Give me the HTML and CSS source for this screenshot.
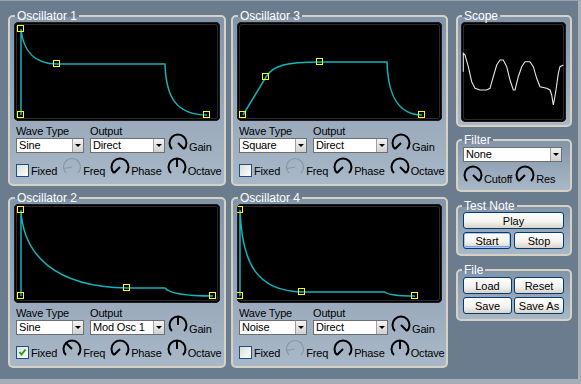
FILE: index.html
```html
<!DOCTYPE html>
<html lang="en">
<head>
  <meta charset="UTF-8">
  <title>Synth</title>
  <link rel="stylesheet" href="styles.css">
</head>
<body>
<div class="window">

  <!-- Oscillators -->
  <div class="oscillators">

    <fieldset class="group osc">
      <legend>Oscillator 1</legend>
      <div class="display">
        <svg width="206" height="99" viewBox="0 0 206 99">
          <path class="env" d="M7 93 L7 7 C9 28, 20 42, 43 42 L151 42 C152 75, 162 93, 193 93"/>
          <rect class="pt" x="3.5" y="3.5" width="6" height="6"/>
          <rect class="pt" x="3.5" y="89.5" width="6" height="6"/>
          <rect class="pt" x="39.5" y="38.5" width="6" height="6"/>
          <rect class="pt" x="189.5" y="89.5" width="6" height="6"/>
        </svg>
      </div>
      <div class="row1">
        <div class="field f1"><span class="label">Wave Type</span><div class="select">Sine<span class="arrow"></span></div></div>
        <div class="field f2"><span class="label">Output</span><div class="select">Direct<span class="arrow"></span></div></div>
        <div class="knob-item">
          <svg class="knob" viewBox="0 0 20 20"><path d="M3.99 16.01 A8.5 8.5 0 1 1 16.01 16.01"/><line x1="10" y1="10" x2="16.01" y2="16.01"/></svg>Gain
        </div>
      </div>
      <div class="row2">
        <div class="check"><span class="box"></span>Fixed</div>
        <div class="knob-item">
          <svg class="knob off" viewBox="0 0 20 20"><path d="M3.99 16.01 A8.5 8.5 0 1 1 16.01 16.01"/><line x1="10" y1="10" x2="1.63" y2="11.48"/></svg>Freq
        </div>
        <div class="knob-item">
          <svg class="knob" viewBox="0 0 20 20"><path d="M3.99 16.01 A8.5 8.5 0 1 1 16.01 16.01"/><line x1="10" y1="10" x2="3.99" y2="16.01"/></svg>Phase
        </div>
        <div class="knob-item">
          <svg class="knob" viewBox="0 0 20 20"><path d="M3.99 16.01 A8.5 8.5 0 1 1 16.01 16.01"/><line x1="10" y1="10" x2="10" y2="1.5"/></svg>Octave
        </div>
      </div>
    </fieldset>

    <fieldset class="group osc">
      <legend>Oscillator 3</legend>
      <div class="display">
        <svg width="205" height="99" viewBox="0 0 205 99">
          <path class="env" d="M6 93 L29 55 C36 43, 50 40, 83 40 L150 40 C151 72, 160 93, 185 93"/>
          <rect class="pt" x="2.5" y="89.5" width="6" height="6"/>
          <rect class="pt" x="25.5" y="51.5" width="6" height="6"/>
          <rect class="pt" x="79.5" y="36.5" width="6" height="6"/>
          <rect class="pt" x="181.5" y="89.5" width="6" height="6"/>
        </svg>
      </div>
      <div class="row1">
        <div class="field f1"><span class="label">Wave Type</span><div class="select">Square<span class="arrow"></span></div></div>
        <div class="field f2"><span class="label">Output</span><div class="select">Direct<span class="arrow"></span></div></div>
        <div class="knob-item">
          <svg class="knob" viewBox="0 0 20 20"><path d="M3.99 16.01 A8.5 8.5 0 1 1 16.01 16.01"/><line x1="10" y1="10" x2="3.99" y2="16.01"/></svg>Gain
        </div>
      </div>
      <div class="row2">
        <div class="check"><span class="box"></span>Fixed</div>
        <div class="knob-item">
          <svg class="knob off" viewBox="0 0 20 20"><path d="M3.99 16.01 A8.5 8.5 0 1 1 16.01 16.01"/><line x1="10" y1="10" x2="1.63" y2="11.48"/></svg>Freq
        </div>
        <div class="knob-item">
          <svg class="knob" viewBox="0 0 20 20"><path d="M3.99 16.01 A8.5 8.5 0 1 1 16.01 16.01"/><line x1="10" y1="10" x2="3.99" y2="16.01"/></svg>Phase
        </div>
        <div class="knob-item">
          <svg class="knob" viewBox="0 0 20 20"><path d="M3.99 16.01 A8.5 8.5 0 1 1 16.01 16.01"/><line x1="10" y1="10" x2="16.01" y2="16.01"/></svg>Octave
        </div>
      </div>
    </fieldset>

    <fieldset class="group osc">
      <legend>Oscillator 2</legend>
      <div class="display">
        <svg width="206" height="99" viewBox="0 0 206 99">
          <path class="env" d="M7 92 L7 6 C9 50, 40 83, 113 84 L151 84 C155 89, 168 92, 199 92"/>
          <rect class="pt" x="3.5" y="2.5" width="6" height="6"/>
          <rect class="pt" x="3.5" y="88.5" width="6" height="6"/>
          <rect class="pt" x="109.5" y="80.5" width="6" height="6"/>
          <rect class="pt" x="195.5" y="88.5" width="6" height="6"/>
        </svg>
      </div>
      <div class="row1">
        <div class="field f1"><span class="label">Wave Type</span><div class="select">Sine<span class="arrow"></span></div></div>
        <div class="field f2"><span class="label">Output</span><div class="select">Mod Osc 1<span class="arrow"></span></div></div>
        <div class="knob-item">
          <svg class="knob" viewBox="0 0 20 20"><path d="M3.99 16.01 A8.5 8.5 0 1 1 16.01 16.01"/><line x1="10" y1="10" x2="10" y2="1.5"/></svg>Gain
        </div>
      </div>
      <div class="row2">
        <div class="check"><span class="box"><svg viewBox="0 0 11 11"><path class="tick" d="M2.5 5 L4.5 7.5 L8.5 2.5"/></svg></span>Fixed</div>
        <div class="knob-item">
          <svg class="knob" viewBox="0 0 20 20"><path d="M3.99 16.01 A8.5 8.5 0 1 1 16.01 16.01"/><line x1="10" y1="10" x2="3.99" y2="3.99"/></svg>Freq
        </div>
        <div class="knob-item">
          <svg class="knob" viewBox="0 0 20 20"><path d="M3.99 16.01 A8.5 8.5 0 1 1 16.01 16.01"/><line x1="10" y1="10" x2="3.99" y2="16.01"/></svg>Phase
        </div>
        <div class="knob-item">
          <svg class="knob" viewBox="0 0 20 20"><path d="M3.99 16.01 A8.5 8.5 0 1 1 16.01 16.01"/><line x1="10" y1="10" x2="10" y2="1.5"/></svg>Octave
        </div>
      </div>
    </fieldset>

    <fieldset class="group osc">
      <legend>Oscillator 4</legend>
      <div class="display">
        <svg width="205" height="99" viewBox="0 0 205 99">
          <path class="env" d="M3 92 L3 6 C5 60, 20 87, 65 88 L148 88 C150 90, 160 92, 178 92"/>
          <rect class="pt" x="-0.5" y="2.5" width="6" height="6"/>
          <rect class="pt" x="-0.5" y="88.5" width="6" height="6"/>
          <rect class="pt" x="61.5" y="84.5" width="6" height="6"/>
          <rect class="pt" x="174.5" y="88.5" width="6" height="6"/>
        </svg>
      </div>
      <div class="row1">
        <div class="field f1"><span class="label">Wave Type</span><div class="select">Noise<span class="arrow"></span></div></div>
        <div class="field f2"><span class="label">Output</span><div class="select">Direct<span class="arrow"></span></div></div>
        <div class="knob-item">
          <svg class="knob" viewBox="0 0 20 20"><path d="M3.99 16.01 A8.5 8.5 0 1 1 16.01 16.01"/><line x1="10" y1="10" x2="16.01" y2="16.01"/></svg>Gain
        </div>
      </div>
      <div class="row2">
        <div class="check"><span class="box"></span>Fixed</div>
        <div class="knob-item">
          <svg class="knob off" viewBox="0 0 20 20"><path d="M3.99 16.01 A8.5 8.5 0 1 1 16.01 16.01"/><line x1="10" y1="10" x2="1.63" y2="11.48"/></svg>Freq
        </div>
        <div class="knob-item">
          <svg class="knob" viewBox="0 0 20 20"><path d="M3.99 16.01 A8.5 8.5 0 1 1 16.01 16.01"/><line x1="10" y1="10" x2="3.99" y2="16.01"/></svg>Phase
        </div>
        <div class="knob-item">
          <svg class="knob" viewBox="0 0 20 20"><path d="M3.99 16.01 A8.5 8.5 0 1 1 16.01 16.01"/><line x1="10" y1="10" x2="10" y2="1.5"/></svg>Octave
        </div>
      </div>
    </fieldset>

  </div>

  <!-- Right column -->
  <div class="side">

    <fieldset class="group scope">
      <legend>Scope</legend>
      <div class="display">
        <svg width="105" height="100" viewBox="0 0 105 100">
          <polyline class="wave" points="2.3,49.7 2.3,31.3 4,33 7.3,44.7 10.7,59.7 14,66.3 19,68 25.7,68 29,66.3 32.3,54.7 35.7,43 39,38 42.3,38 45.7,44.7 49,58 52.3,68 54,68 57.3,54.7 60.7,44.7 64,39.7 69,39.7 72.3,44.7 75.7,56.3 79,64.7 85.7,66.3 89,68 90.7,73 92.3,83 93.3,78 95,68 97.3,51.3 99,44.7 102.3,43"/>
        </svg>
      </div>
    </fieldset>

    <fieldset class="group filter">
      <legend>Filter</legend>
      <div class="inner">
        <div class="select wide">None<span class="arrow"></span></div>
        <div class="knob-row">
          <div class="knob-item">
            <svg class="knob" viewBox="0 0 20 20"><path d="M3.99 16.01 A8.5 8.5 0 1 1 16.01 16.01"/><line x1="10" y1="10" x2="16.01" y2="16.01"/></svg>Cutoff
          </div>
          <div class="knob-item">
            <svg class="knob" viewBox="0 0 20 20"><path d="M3.99 16.01 A8.5 8.5 0 1 1 16.01 16.01"/><line x1="10" y1="10" x2="3.99" y2="16.01"/></svg>Res
          </div>
        </div>
      </div>
    </fieldset>

    <fieldset class="group test">
      <legend>Test Note</legend>
      <div class="inner">
        <button class="btn">Play</button>
        <div class="btn-pair">
          <button class="btn default">Start</button>
          <button class="btn">Stop</button>
        </div>
      </div>
    </fieldset>

    <fieldset class="group file">
      <legend>File</legend>
      <div class="inner">
        <div class="btn-pair first">
          <button class="btn">Load</button>
          <button class="btn">Reset</button>
        </div>
        <div class="btn-pair">
          <button class="btn">Save</button>
          <button class="btn">Save As</button>
        </div>
      </div>
    </fieldset>

  </div>
</div>
</body>
</html>
```
FILE: styles.css
```css
/* General */
body {
  margin: 0;
  font-family: "Liberation Sans", Arial, sans-serif;
  font-size: 11px;
  letter-spacing: -0.15px;
  color: #000;
  background-color: #6b7c8f;
}

.window {
  width: 581px;
  height: 384px;
  box-sizing: border-box;
  border-top: 1px solid #9aa3ad;
  border-right: 3px solid #a9b1ba;
  border-bottom: 5px solid #a4adb6;
  padding: 9px 0 0 8px;
  display: flex;
  gap: 8px;
}

/* Group boxes */
.group {
  margin: 0;
  min-width: 0;
  border: 2px solid #d5d2c3;
  border-radius: 5px;
  background: linear-gradient(#8294a9, #a9b8c8);
}
.group legend {
  color: #fff;
  font-size: 12px;
  line-height: 12px;
  letter-spacing: 0;
  padding: 0 2px;
  margin-left: 1px;
}

.display {
  background-color: #000;
  border-radius: 5px;
  overflow: hidden;
  box-shadow: inset 0 0 0 1px #1c1c1c, inset 0 0 0 2px #000, inset 0 0 0 3px #2a2a2a;
}
.display svg {
  display: block;
}
.env {
  fill: none;
  stroke: #15b3bb;
  stroke-width: 1.5;
}
.pt {
  fill: none;
  stroke: #ffff00;
  stroke-width: 1;
  shape-rendering: crispEdges;
}
.wave {
  fill: none;
  stroke: #e6e6e6;
  stroke-width: 1.1;
}

/* Oscillators */
.oscillators {
  display: grid;
  grid-template-columns: 218px 217px;
  column-gap: 5px;
  row-gap: 6px;
  align-content: start;
}
.osc {
  padding: 0 4px 7px 4px;
}
.osc .display {
  height: 99px;
}

.row1 {
  display: flex;
  align-items: flex-end;
  margin: 4px 0 0 2px;
}
.field {
  display: flex;
  flex-direction: column;
}
.field .label {
  line-height: 12px;
  margin-bottom: 1px;
}
.f1 {
  width: 68px;
  margin-right: 6px;
}
.f2 {
  width: 75px;
  margin-right: 3px;
}

.select {
  height: 15px;
  box-sizing: border-box;
  border: 1px solid #6e6e6e;
  background-color: #fff;
  display: flex;
  align-items: center;
  padding-left: 2px;
  line-height: 13px;
  white-space: nowrap;
}
.select .arrow {
  margin-left: auto;
  width: 10px;
  height: 13px;
  flex: none;
  background: linear-gradient(#f2f2f2, #d2d2d2);
  border-left: 1px solid #a0a0a0;
  display: flex;
  align-items: center;
  justify-content: center;
}
.select .arrow::after {
  content: "";
  border-left: 3px solid transparent;
  border-right: 3px solid transparent;
  border-top: 3px solid #000;
}
.select.wide {
  width: 99px;
}

.row2 {
  display: flex;
  align-items: flex-end;
  gap: 5px;
  margin: 4px 0 0 2px;
}
.check {
  display: flex;
  align-items: flex-end;
  gap: 2px;
  line-height: 12px;
}
.box {
  width: 13px;
  height: 13px;
  box-sizing: border-box;
  border: 1px solid #1c5180;
  background: linear-gradient(135deg, #dcdcd7, #fff);
}
.box svg {
  display: block;
  width: 11px;
  height: 11px;
}
.tick {
  fill: none;
  stroke: #21a121;
  stroke-width: 2;
}

/* Knobs */
.knob-item {
  display: flex;
  align-items: flex-end;
  gap: 1px;
  line-height: 12px;
}
.knob {
  display: block;
  width: 20px;
  height: 20px;
  flex: none;
}
.knob path,
.knob line {
  fill: none;
  stroke: #000;
  stroke-width: 2;
}
.knob.off path,
.knob.off line {
  stroke: #8896a7;
  stroke-width: 1.2;
}

/* Right column */
.side {
  width: 116px;
  display: flex;
  flex-direction: column;
}
.scope {
  padding: 0 4px 3px 3px;
}
.scope .display {
  height: 100px;
}
.filter,
.test,
.file {
  padding: 0 4px 5px 3px;
  margin-top: 8px;
}
.filter {
  margin-top: 7px;
}
.inner {
  margin-left: 2px;
  width: 101px;
}
.filter .select {
  margin-top: 1px;
}
.knob-row {
  display: flex;
  gap: 3px;
  margin-top: 3px;
}

/* Buttons */
.btn {
  display: block;
  width: 100%;
  height: 17px;
  box-sizing: border-box;
  padding: 0;
  border: 1px solid #003c74;
  border-radius: 3px;
  background: linear-gradient(#ffffff, #f3f2ee 60%, #d8d3c8);
  font-family: inherit;
  font-size: 11px;
  color: #000;
}
.btn.default {
  box-shadow: inset 0 0 0 1px #a9c7f0, inset 0 -1px 0 1px #7ba2e7;
}
.btn-pair {
  display: grid;
  grid-template-columns: 48px 50px;
  gap: 3px;
  margin-top: 3px;
}
.btn-pair.first {
  margin-top: 1px;
}
.file .btn-pair {
  grid-template-columns: 49px 50px;
  column-gap: 2px;
}
```
